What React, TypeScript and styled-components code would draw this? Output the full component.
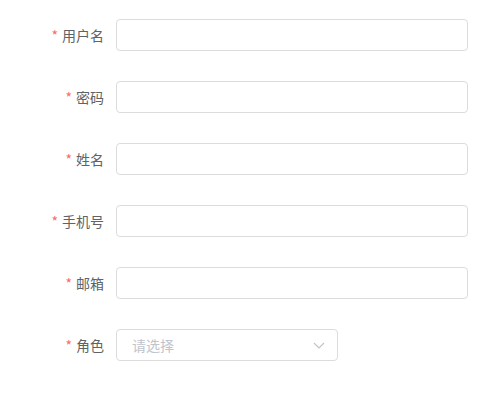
import React from "react";
import styled, { createGlobalStyle } from "styled-components";

const Global = createGlobalStyle`
  html, body {
    margin: 0;
    padding: 0;
    background: #fff;
    font-family: "Noto Sans CJK SC", "Liberation Sans", sans-serif;
  }
`;

const Form = styled.form`
  display: flex;
  flex-direction: column;
  gap: 30px;
  padding: 19px 19px 0 0;
`;

const Item = styled.div`
  display: flex;
  align-items: center;
  height: 32px;
`;

const Label = styled.label<{ $required?: boolean }>`
  width: 116px;
  box-sizing: border-box;
  padding-right: 12px;
  text-align: right;
  font-size: 14px;
  line-height: 32px;
  color: #606266;

  &::before {
    content: ${(p) => (p.$required ? "'*'" : "none")};
    color: #f56c6c;
    margin-right: 4px;
  }
`;

const Input = styled.input`
  width: 352px;
  height: 32px;
  box-sizing: border-box;
  padding: 0 15px;
  border: 1px solid #dcdcdc;
  border-radius: 4px;
  font-size: 14px;
  color: #606266;
  outline: none;
  font-family: inherit;
`;

const SelectBox = styled.div`
  width: 222px;
  height: 32px;
  box-sizing: border-box;
  border: 1px solid #dcdcdc;
  border-radius: 4px;
  display: flex;
  align-items: center;
  justify-content: space-between;
  padding: 0 12px 0 15px;
`;

const Placeholder = styled.span`
  font-size: 14px;
  color: #c0c4cc;
`;

const Arrow = () => (
  <svg width="12" height="12" viewBox="0 0 12 12">
    <path d="M1 4 L6 9 L11 4" fill="none" stroke="#c0c4cc" strokeWidth="1.2" />
  </svg>
);

const fields = ["用户名", "密码", "姓名", "手机号", "邮箱"];

export default function App() {
  return (
    <>
      <Global />
      <Form>
        {fields.map((f) => (
          <Item key={f}>
            <Label $required>{f}</Label>
            <Input type={f === "密码" ? "password" : "text"} />
          </Item>
        ))}
        <Item>
          <Label $required>角色</Label>
          <SelectBox>
            <Placeholder>请选择</Placeholder>
            <Arrow />
          </SelectBox>
        </Item>
      </Form>
    </>
  );
}
